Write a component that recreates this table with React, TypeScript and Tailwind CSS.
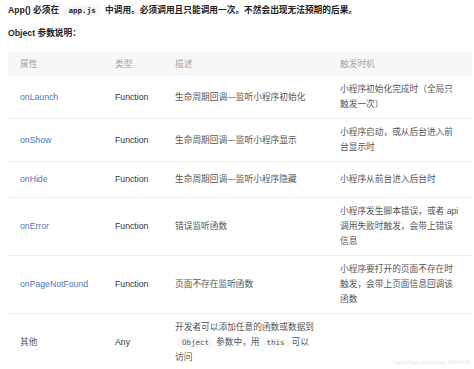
const rows = [
  { name: 'onLaunch', type: 'Function', desc: '生命周期回调—监听小程序初始化', when: '小程序初始化完成时（全局只触发一次）' },
  { name: 'onShow', type: 'Function', desc: '生命周期回调—监听小程序显示', when: '小程序启动，或从后台进入前台显示时' },
  { name: 'onHide', type: 'Function', desc: '生命周期回调—监听小程序隐藏', when: '小程序从前台进入后台时' },
  { name: 'onError', type: 'Function', desc: '错误监听函数', when: '小程序发生脚本错误，或者 api 调用失败时触发，会带上错误信息' },
  { name: 'onPageNotFound', type: 'Function', desc: '页面不存在监听函数', when: '小程序要打开的页面不存在时触发，会带上页面信息回调该函数' },
];

const font = "font-['Liberation_Sans','Noto_Sans_CJK_SC',sans-serif]";
const mono = "font-['DejaVu_Sans_Mono','Noto_Sans_CJK_SC',monospace]";

function Code({ children }: { children: string }) {
  return (
    <code className={`${mono} inline-block align-baseline leading-[11px] text-[7.5px] bg-[#f8f8f8] px-[4px] mx-[3px]`}>
      {children}
    </code>
  );
}

export default function App() {
  return (
    <div className={`${font} w-[474px] h-[369px] overflow-hidden bg-white relative text-[#333]`}>
      <div className="px-2 pt-[4px] text-[8.7px] leading-[13px] font-bold text-[#222] whitespace-nowrap">
        App() 必须在 <Code>app.js</Code> 中调用。必须调用且只能调用一次。不然会出现无法预期的后果。
      </div>
      <div className="px-2 mt-[10px] text-[8.7px] leading-[13px] font-bold text-[#222]">Object 参数说明：</div>

      <table className="ml-2 mt-[12px] w-[464px] table-fixed border-collapse text-[8.7px] leading-[15px]">
        <colgroup>
          <col className="w-[95px]" />
          <col className="w-[60px]" />
          <col className="w-[165px]" />
          <col className="w-[144px]" />
        </colgroup>
        <thead>
          <tr className="bg-[#f7f7f7] text-[#a5a5a5]">
            <th className="h-[24px] px-3 text-left font-normal">属性</th>
            <th className="h-[24px] px-3 text-left font-normal">类型</th>
            <th className="h-[24px] px-3 text-left font-normal">描述</th>
            <th className="h-[24px] px-3 text-left font-normal">触发时机</th>
          </tr>
        </thead>
        <tbody>
          {rows.map((r) => (
            <tr key={r.name} className="border-b border-[#eeeeee]">
              <td className="h-[36px] px-3 py-[6px] text-[#4a7ab3]">{r.name}</td>
              <td className="px-3 py-[6px]">{r.type}</td>
              <td className="px-3 py-[6px] text-[#555]">{r.desc}</td>
              <td className="px-3 py-[6px] text-[#555]">{r.when}</td>
            </tr>
          ))}
          <tr>
            <td className="h-[36px] px-3 py-[6px] text-[#555]">其他</td>
            <td className="px-3 py-[6px]">Any</td>
            <td className="px-3 py-[6px] text-[#555]">
              开发者可以添加任意的函数或数据到
              <br />
              <Code>Object</Code>参数中，用<Code>this</Code>可以
              <br />
              访问
            </td>
            <td className="px-3 py-[6px]" />
          </tr>
        </tbody>
      </table>

      <div className="absolute right-[4px] bottom-[3px] text-[5px] text-[#e6e6e6]">
        https://blog.csdn.net/qq_41943749
      </div>
    </div>
  );
}
